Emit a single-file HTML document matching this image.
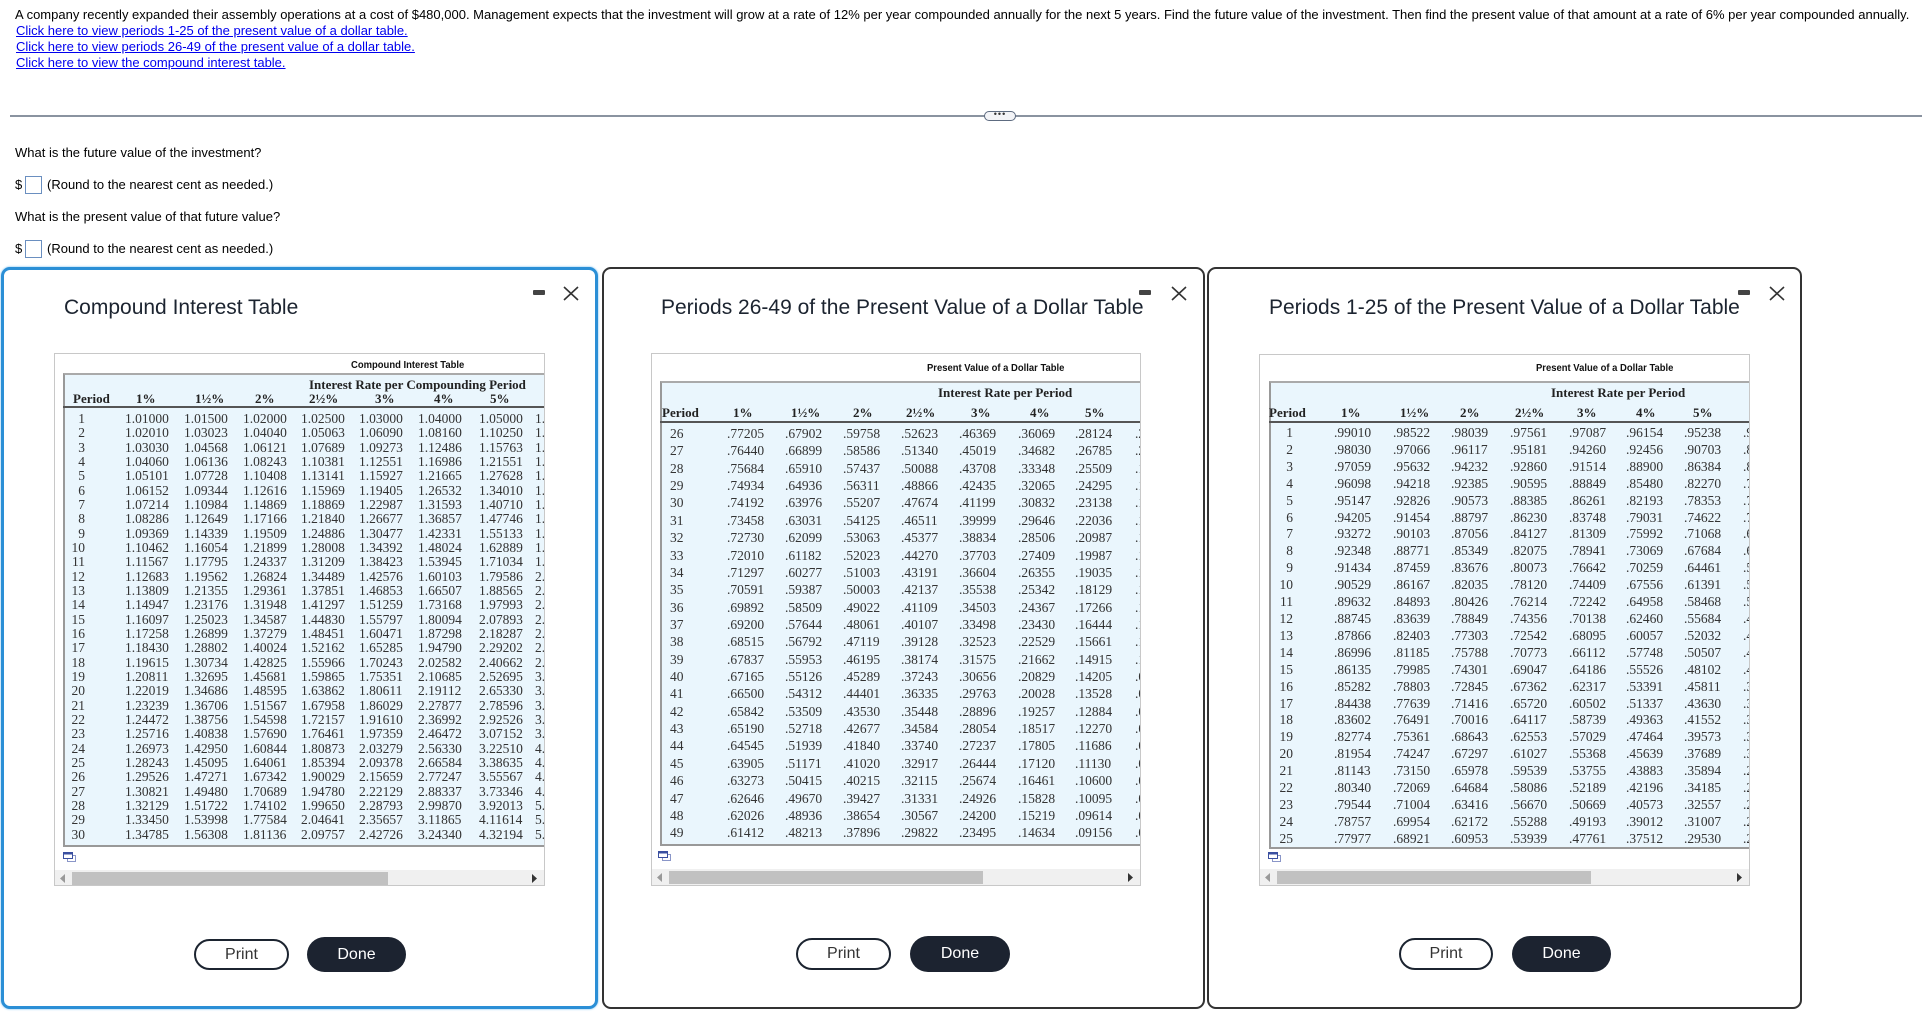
<!DOCTYPE html>
<html><head><meta charset="utf-8">
<style>
*{margin:0;padding:0;box-sizing:border-box}
body{width:1922px;height:1012px;overflow:hidden;background:#fff;font-family:"Liberation Sans",Arial,sans-serif;position:relative;color:#000}
.a{position:absolute;white-space:nowrap}
.t{font-size:13px;line-height:16px}
.lk{color:#0000ee;text-decoration:underline}
.ib{position:absolute;width:17px;height:18px;border:1px solid #6a8fc0;background:#fff}
.dlg{position:absolute;top:267px;height:742px;border:2px solid #333;border-radius:9px;background:#fff}
.dlg.f{border:3px solid #2b8fd6;box-shadow:0 0 2px #6bb8ee}
.ttl{position:absolute;top:296px;font-size:21px;color:#1c2430;white-space:nowrap}
.min{position:absolute;width:12px;height:5px;background:#444;border-radius:1px}
.box{position:absolute;border:1px solid #c8c8c8;background:#fff;overflow:hidden}
.inner{position:absolute;background:#eaf6fd;border-left:2px solid #999;border-top:2px solid #aaa;border-bottom:2px solid #999}
.lab{position:absolute;font-family:"Liberation Sans",sans-serif;font-weight:bold;font-size:10.5px;color:#111;white-space:nowrap;transform:scaleX(.9);transform-origin:left}
.irp{position:absolute;font-family:"Liberation Serif",serif;font-weight:bold;font-size:13px;color:#222;white-space:nowrap}
.hl{position:absolute;height:2px;background:#555}
table{position:absolute;border-collapse:collapse;table-layout:fixed;font-family:"Liberation Serif",serif;font-size:13.5px;color:#333}
td{padding:0;white-space:nowrap;overflow:hidden}
.h td{font-weight:bold;color:#222;font-size:13px}
.sb{position:absolute;left:0;right:0;height:17px;background:#f0f0f0}
.th{position:absolute;top:2px;height:13px;background:#c1c1c1}
.ico{position:absolute;width:13px;height:10px}
.btn{position:absolute;border-radius:18px;font-size:16px;text-align:center}
.pr{border:2px solid #1c2430;background:#fff;color:#333}
.dn{background:#1c2330;color:#fff}
</style></head><body>

<div class="a t" style="left:15px;top:7px">A company recently expanded their assembly operations at a cost of $480,000. Management expects that the investment will grow at a rate of 12% per year compounded annually for the next 5 years. Find the future value of the investment. Then find the present value of that amount at a rate of 6% per year compounded annually.</div>
<div class="a t lk" style="left:16px;top:23px">Click here to view periods 1-25 of the present value of a dollar table.</div>
<div class="a t lk" style="left:16px;top:39px">Click here to view periods 26-49 of the present value of a dollar table.</div>
<div class="a t lk" style="left:16px;top:55px">Click here to view the compound interest table.</div>

<div class="a" style="left:10px;top:115px;width:1912px;height:2px;background:#8a93a0"></div>
<div class="a" style="left:984px;top:111px;width:32px;height:10px;border:1.5px solid #5d6b80;border-radius:5px;background:#f3f4f7;font-size:9px;line-height:5px;text-align:center;color:#333;letter-spacing:1px">•••</div>

<div class="a t" style="left:15px;top:145px">What is the future value of the investment?</div>
<div class="a t" style="left:15px;top:177px">$</div><div class="ib" style="left:25px;top:176px"></div>
<div class="a t" style="left:47px;top:177px">(Round to the nearest cent as needed.)</div>
<div class="a t" style="left:15px;top:209px">What is the present value of that future value?</div>
<div class="a t" style="left:15px;top:241px">$</div><div class="ib" style="left:25px;top:240px"></div>
<div class="a t" style="left:47px;top:241px">(Round to the nearest cent as needed.)</div>

<!-- Dialog 1 -->
<div class="dlg f" style="left:1px;width:597px"></div>
<div class="ttl" style="left:64px">Compound Interest Table</div>
<div class="min" style="left:533px;top:290px"></div>
<svg class="a" style="left:563px;top:286px" width="16" height="15"><path d="M1 1L15 14M15 1L1 14" stroke="#333" stroke-width="1.6"/></svg>
<div class="box" style="left:54px;top:353px;width:491px;height:533px">
 <div class="lab" style="left:296px;top:5px">Compound Interest Table</div>
 <div class="inner" style="left:8px;top:19px;width:490px;height:474px"></div>
 <div class="irp" style="left:254px;top:23px">Interest Rate per Compounding Period</div>
 <div class="hl" style="left:8px;top:52px;width:490px"></div>
 <table class="h" style="left:8px;top:37px;width:532px"><colgroup><col style="width:62px"><col style="width:59px"><col style="width:59px"><col style="width:58px"><col style="width:58px"><col style="width:59px"><col style="width:61px"><col style="width:56px"><col style="width:60px"></colgroup>
 <tr><td style="padding-left:10px">Period</td><td style="padding-left:11px">1%</td><td style="padding-left:11px">1½%</td><td style="padding-left:12px">2%</td><td style="padding-left:8px">2½%</td><td style="padding-left:16px">3%</td><td style="padding-left:16px">4%</td><td style="padding-left:11px">5%</td><td></td></tr></table>
 <table style="left:8px;top:58px;width:532px;line-height:14.33px"><colgroup><col style="width:62px"><col style="width:59px"><col style="width:59px"><col style="width:58px"><col style="width:58px"><col style="width:59px"><col style="width:61px"><col style="width:56px"><col style="width:60px"></colgroup>
<tr><td style="text-align:right;padding-right:40px">1</td><td>1.01000</td><td>1.01500</td><td>1.02000</td><td>1.02500</td><td>1.03000</td><td>1.04000</td><td>1.05000</td><td>1.06000</td></tr>
<tr><td style="text-align:right;padding-right:40px">2</td><td>1.02010</td><td>1.03023</td><td>1.04040</td><td>1.05063</td><td>1.06090</td><td>1.08160</td><td>1.10250</td><td>1.12360</td></tr>
<tr><td style="text-align:right;padding-right:40px">3</td><td>1.03030</td><td>1.04568</td><td>1.06121</td><td>1.07689</td><td>1.09273</td><td>1.12486</td><td>1.15763</td><td>1.19102</td></tr>
<tr><td style="text-align:right;padding-right:40px">4</td><td>1.04060</td><td>1.06136</td><td>1.08243</td><td>1.10381</td><td>1.12551</td><td>1.16986</td><td>1.21551</td><td>1.26248</td></tr>
<tr><td style="text-align:right;padding-right:40px">5</td><td>1.05101</td><td>1.07728</td><td>1.10408</td><td>1.13141</td><td>1.15927</td><td>1.21665</td><td>1.27628</td><td>1.33823</td></tr>
<tr><td style="text-align:right;padding-right:40px">6</td><td>1.06152</td><td>1.09344</td><td>1.12616</td><td>1.15969</td><td>1.19405</td><td>1.26532</td><td>1.34010</td><td>1.41852</td></tr>
<tr><td style="text-align:right;padding-right:40px">7</td><td>1.07214</td><td>1.10984</td><td>1.14869</td><td>1.18869</td><td>1.22987</td><td>1.31593</td><td>1.40710</td><td>1.50363</td></tr>
<tr><td style="text-align:right;padding-right:40px">8</td><td>1.08286</td><td>1.12649</td><td>1.17166</td><td>1.21840</td><td>1.26677</td><td>1.36857</td><td>1.47746</td><td>1.59385</td></tr>
<tr><td style="text-align:right;padding-right:40px">9</td><td>1.09369</td><td>1.14339</td><td>1.19509</td><td>1.24886</td><td>1.30477</td><td>1.42331</td><td>1.55133</td><td>1.68948</td></tr>
<tr><td style="text-align:right;padding-right:40px">10</td><td>1.10462</td><td>1.16054</td><td>1.21899</td><td>1.28008</td><td>1.34392</td><td>1.48024</td><td>1.62889</td><td>1.79085</td></tr>
<tr><td style="text-align:right;padding-right:40px">11</td><td>1.11567</td><td>1.17795</td><td>1.24337</td><td>1.31209</td><td>1.38423</td><td>1.53945</td><td>1.71034</td><td>1.89830</td></tr>
<tr><td style="text-align:right;padding-right:40px">12</td><td>1.12683</td><td>1.19562</td><td>1.26824</td><td>1.34489</td><td>1.42576</td><td>1.60103</td><td>1.79586</td><td>2.01220</td></tr>
<tr><td style="text-align:right;padding-right:40px">13</td><td>1.13809</td><td>1.21355</td><td>1.29361</td><td>1.37851</td><td>1.46853</td><td>1.66507</td><td>1.88565</td><td>2.13293</td></tr>
<tr><td style="text-align:right;padding-right:40px">14</td><td>1.14947</td><td>1.23176</td><td>1.31948</td><td>1.41297</td><td>1.51259</td><td>1.73168</td><td>1.97993</td><td>2.26090</td></tr>
<tr><td style="text-align:right;padding-right:40px">15</td><td>1.16097</td><td>1.25023</td><td>1.34587</td><td>1.44830</td><td>1.55797</td><td>1.80094</td><td>2.07893</td><td>2.39656</td></tr>
<tr><td style="text-align:right;padding-right:40px">16</td><td>1.17258</td><td>1.26899</td><td>1.37279</td><td>1.48451</td><td>1.60471</td><td>1.87298</td><td>2.18287</td><td>2.54035</td></tr>
<tr><td style="text-align:right;padding-right:40px">17</td><td>1.18430</td><td>1.28802</td><td>1.40024</td><td>1.52162</td><td>1.65285</td><td>1.94790</td><td>2.29202</td><td>2.69277</td></tr>
<tr><td style="text-align:right;padding-right:40px">18</td><td>1.19615</td><td>1.30734</td><td>1.42825</td><td>1.55966</td><td>1.70243</td><td>2.02582</td><td>2.40662</td><td>2.85434</td></tr>
<tr><td style="text-align:right;padding-right:40px">19</td><td>1.20811</td><td>1.32695</td><td>1.45681</td><td>1.59865</td><td>1.75351</td><td>2.10685</td><td>2.52695</td><td>3.02560</td></tr>
<tr><td style="text-align:right;padding-right:40px">20</td><td>1.22019</td><td>1.34686</td><td>1.48595</td><td>1.63862</td><td>1.80611</td><td>2.19112</td><td>2.65330</td><td>3.20714</td></tr>
<tr><td style="text-align:right;padding-right:40px">21</td><td>1.23239</td><td>1.36706</td><td>1.51567</td><td>1.67958</td><td>1.86029</td><td>2.27877</td><td>2.78596</td><td>3.39956</td></tr>
<tr><td style="text-align:right;padding-right:40px">22</td><td>1.24472</td><td>1.38756</td><td>1.54598</td><td>1.72157</td><td>1.91610</td><td>2.36992</td><td>2.92526</td><td>3.60354</td></tr>
<tr><td style="text-align:right;padding-right:40px">23</td><td>1.25716</td><td>1.40838</td><td>1.57690</td><td>1.76461</td><td>1.97359</td><td>2.46472</td><td>3.07152</td><td>3.81975</td></tr>
<tr><td style="text-align:right;padding-right:40px">24</td><td>1.26973</td><td>1.42950</td><td>1.60844</td><td>1.80873</td><td>2.03279</td><td>2.56330</td><td>3.22510</td><td>4.04893</td></tr>
<tr><td style="text-align:right;padding-right:40px">25</td><td>1.28243</td><td>1.45095</td><td>1.64061</td><td>1.85394</td><td>2.09378</td><td>2.66584</td><td>3.38635</td><td>4.29187</td></tr>
<tr><td style="text-align:right;padding-right:40px">26</td><td>1.29526</td><td>1.47271</td><td>1.67342</td><td>1.90029</td><td>2.15659</td><td>2.77247</td><td>3.55567</td><td>4.54938</td></tr>
<tr><td style="text-align:right;padding-right:40px">27</td><td>1.30821</td><td>1.49480</td><td>1.70689</td><td>1.94780</td><td>2.22129</td><td>2.88337</td><td>3.73346</td><td>4.82235</td></tr>
<tr><td style="text-align:right;padding-right:40px">28</td><td>1.32129</td><td>1.51722</td><td>1.74102</td><td>1.99650</td><td>2.28793</td><td>2.99870</td><td>3.92013</td><td>5.11169</td></tr>
<tr><td style="text-align:right;padding-right:40px">29</td><td>1.33450</td><td>1.53998</td><td>1.77584</td><td>2.04641</td><td>2.35657</td><td>3.11865</td><td>4.11614</td><td>5.41839</td></tr>
<tr><td style="text-align:right;padding-right:40px">30</td><td>1.34785</td><td>1.56308</td><td>1.81136</td><td>2.09757</td><td>2.42726</td><td>3.24340</td><td>4.32194</td><td>5.74349</td></tr>
 </table>
 <svg class="ico" style="left:8px;top:498px" width="13" height="10"><rect x="0.5" y="0.5" width="9" height="6" fill="#fff" stroke="#3a4fa0"/><rect x="0.5" y="0.5" width="9" height="2" fill="#3a4fa0"/><path d="M10 3.5h2.5v6h-8v-2.5" fill="none" stroke="#8a96c8"/></svg>
 <div class="sb" style="top:516px"><svg class="a" style="left:5px;top:4px" width="5" height="9"><path d="M5 0L0 4.5L5 9Z" fill="#999"/></svg><div class="th" style="left:17px;width:316px"></div><svg class="a" style="right:7px;top:4px" width="5" height="9"><path d="M0 0L5 4.5L0 9Z" fill="#333"/></svg></div>
</div>
<div class="btn pr" style="left:194px;top:939px;width:95px;height:31px;line-height:27px">Print</div>
<div class="btn dn" style="left:307px;top:937px;width:99px;height:35px;line-height:35px">Done</div>

<!-- Dialog 2 -->
<div class="dlg" style="left:602px;width:603px"></div>
<div class="ttl" style="left:661px">Periods 26-49 of the Present Value of a Dollar Table</div>
<div class="min" style="left:1139px;top:290px"></div>
<svg class="a" style="left:1171px;top:286px" width="16" height="15"><path d="M1 1L15 14M15 1L1 14" stroke="#333" stroke-width="1.6"/></svg>
<div class="box" style="left:651px;top:353px;width:490px;height:533px">
 <div class="lab" style="left:275px;top:8px">Present Value of a Dollar Table</div>
 <div class="inner" style="left:8px;top:27px;width:490px;height:465px"></div>
 <div class="irp" style="left:286px;top:31px">Interest Rate per Period</div>
 <div class="hl" style="left:8px;top:67px;width:490px"></div>
 <table class="h" style="left:8px;top:51px;width:535px"><colgroup><col style="width:67px"><col style="width:58px"><col style="width:58px"><col style="width:58px"><col style="width:58px"><col style="width:59px"><col style="width:57px"><col style="width:60px"><col style="width:60px"></colgroup>
 <tr><td style="padding-left:2px">Period</td><td style="padding-left:6px">1%</td><td style="padding-left:6px">1½%</td><td style="padding-left:10px">2%</td><td style="padding-left:5px">2½%</td><td style="padding-left:12px">3%</td><td style="padding-left:12px">4%</td><td style="padding-left:10px">5%</td><td></td></tr></table>
 <table style="left:8px;top:71px;width:535px;line-height:17.36px"><colgroup><col style="width:67px"><col style="width:58px"><col style="width:58px"><col style="width:58px"><col style="width:58px"><col style="width:59px"><col style="width:57px"><col style="width:60px"><col style="width:60px"></colgroup>
<tr><td style="padding-left:10px">26</td><td>.77205</td><td>.67902</td><td>.59758</td><td>.52623</td><td>.46369</td><td>.36069</td><td>.28124</td><td>.21981</td></tr>
<tr><td style="padding-left:10px">27</td><td>.76440</td><td>.66899</td><td>.58586</td><td>.51340</td><td>.45019</td><td>.34682</td><td>.26785</td><td>.20737</td></tr>
<tr><td style="padding-left:10px">28</td><td>.75684</td><td>.65910</td><td>.57437</td><td>.50088</td><td>.43708</td><td>.33348</td><td>.25509</td><td>.19563</td></tr>
<tr><td style="padding-left:10px">29</td><td>.74934</td><td>.64936</td><td>.56311</td><td>.48866</td><td>.42435</td><td>.32065</td><td>.24295</td><td>.18456</td></tr>
<tr><td style="padding-left:10px">30</td><td>.74192</td><td>.63976</td><td>.55207</td><td>.47674</td><td>.41199</td><td>.30832</td><td>.23138</td><td>.17411</td></tr>
<tr><td style="padding-left:10px">31</td><td>.73458</td><td>.63031</td><td>.54125</td><td>.46511</td><td>.39999</td><td>.29646</td><td>.22036</td><td>.16425</td></tr>
<tr><td style="padding-left:10px">32</td><td>.72730</td><td>.62099</td><td>.53063</td><td>.45377</td><td>.38834</td><td>.28506</td><td>.20987</td><td>.15496</td></tr>
<tr><td style="padding-left:10px">33</td><td>.72010</td><td>.61182</td><td>.52023</td><td>.44270</td><td>.37703</td><td>.27409</td><td>.19987</td><td>.14619</td></tr>
<tr><td style="padding-left:10px">34</td><td>.71297</td><td>.60277</td><td>.51003</td><td>.43191</td><td>.36604</td><td>.26355</td><td>.19035</td><td>.13791</td></tr>
<tr><td style="padding-left:10px">35</td><td>.70591</td><td>.59387</td><td>.50003</td><td>.42137</td><td>.35538</td><td>.25342</td><td>.18129</td><td>.13011</td></tr>
<tr><td style="padding-left:10px">36</td><td>.69892</td><td>.58509</td><td>.49022</td><td>.41109</td><td>.34503</td><td>.24367</td><td>.17266</td><td>.12274</td></tr>
<tr><td style="padding-left:10px">37</td><td>.69200</td><td>.57644</td><td>.48061</td><td>.40107</td><td>.33498</td><td>.23430</td><td>.16444</td><td>.11579</td></tr>
<tr><td style="padding-left:10px">38</td><td>.68515</td><td>.56792</td><td>.47119</td><td>.39128</td><td>.32523</td><td>.22529</td><td>.15661</td><td>.10924</td></tr>
<tr><td style="padding-left:10px">39</td><td>.67837</td><td>.55953</td><td>.46195</td><td>.38174</td><td>.31575</td><td>.21662</td><td>.14915</td><td>.10306</td></tr>
<tr><td style="padding-left:10px">40</td><td>.67165</td><td>.55126</td><td>.45289</td><td>.37243</td><td>.30656</td><td>.20829</td><td>.14205</td><td>.09722</td></tr>
<tr><td style="padding-left:10px">41</td><td>.66500</td><td>.54312</td><td>.44401</td><td>.36335</td><td>.29763</td><td>.20028</td><td>.13528</td><td>.09172</td></tr>
<tr><td style="padding-left:10px">42</td><td>.65842</td><td>.53509</td><td>.43530</td><td>.35448</td><td>.28896</td><td>.19257</td><td>.12884</td><td>.08653</td></tr>
<tr><td style="padding-left:10px">43</td><td>.65190</td><td>.52718</td><td>.42677</td><td>.34584</td><td>.28054</td><td>.18517</td><td>.12270</td><td>.08163</td></tr>
<tr><td style="padding-left:10px">44</td><td>.64545</td><td>.51939</td><td>.41840</td><td>.33740</td><td>.27237</td><td>.17805</td><td>.11686</td><td>.07701</td></tr>
<tr><td style="padding-left:10px">45</td><td>.63905</td><td>.51171</td><td>.41020</td><td>.32917</td><td>.26444</td><td>.17120</td><td>.11130</td><td>.07265</td></tr>
<tr><td style="padding-left:10px">46</td><td>.63273</td><td>.50415</td><td>.40215</td><td>.32115</td><td>.25674</td><td>.16461</td><td>.10600</td><td>.06854</td></tr>
<tr><td style="padding-left:10px">47</td><td>.62646</td><td>.49670</td><td>.39427</td><td>.31331</td><td>.24926</td><td>.15828</td><td>.10095</td><td>.06466</td></tr>
<tr><td style="padding-left:10px">48</td><td>.62026</td><td>.48936</td><td>.38654</td><td>.30567</td><td>.24200</td><td>.15219</td><td>.09614</td><td>.06100</td></tr>
<tr><td style="padding-left:10px">49</td><td>.61412</td><td>.48213</td><td>.37896</td><td>.29822</td><td>.23495</td><td>.14634</td><td>.09156</td><td>.05755</td></tr>
 </table>
 <svg class="ico" style="left:6px;top:497px" width="13" height="10"><rect x="0.5" y="0.5" width="9" height="6" fill="#fff" stroke="#3a4fa0"/><rect x="0.5" y="0.5" width="9" height="2" fill="#3a4fa0"/><path d="M10 3.5h2.5v6h-8v-2.5" fill="none" stroke="#8a96c8"/></svg>
 <div class="sb" style="top:515px"><svg class="a" style="left:5px;top:4px" width="5" height="9"><path d="M5 0L0 4.5L5 9Z" fill="#999"/></svg><div class="th" style="left:17px;width:314px"></div><svg class="a" style="right:7px;top:4px" width="5" height="9"><path d="M0 0L5 4.5L0 9Z" fill="#333"/></svg></div>
</div>
<div class="btn pr" style="left:796px;top:938px;width:95px;height:32px;line-height:28px">Print</div>
<div class="btn dn" style="left:910px;top:936px;width:100px;height:36px;line-height:36px">Done</div>

<!-- Dialog 3 -->
<div class="dlg" style="left:1207px;width:595px"></div>
<div class="ttl" style="left:1269px">Periods 1-25 of the Present Value of a Dollar Table</div>
<div class="min" style="left:1738px;top:290px"></div>
<svg class="a" style="left:1769px;top:286px" width="16" height="15"><path d="M1 1L15 14M15 1L1 14" stroke="#333" stroke-width="1.6"/></svg>
<div class="box" style="left:1259px;top:354px;width:491px;height:532px">
 <div class="lab" style="left:276px;top:7px">Present Value of a Dollar Table</div>
 <div class="inner" style="left:9px;top:26px;width:490px;height:468px"></div>
 <div class="irp" style="left:291px;top:30px">Interest Rate per Period</div>
 <div class="hl" style="left:9px;top:66px;width:490px"></div>
 <table class="h" style="left:9px;top:50px;width:534px"><colgroup><col style="width:65px"><col style="width:59px"><col style="width:58px"><col style="width:59px"><col style="width:59px"><col style="width:57px"><col style="width:58px"><col style="width:59px"><col style="width:60px"></colgroup>
 <tr><td style="padding-left:0">Period</td><td style="padding-left:7px">1%</td><td style="padding-left:7px">1½%</td><td style="padding-left:9px">2%</td><td style="padding-left:5px">2½%</td><td style="padding-left:8px">3%</td><td style="padding-left:10px">4%</td><td style="padding-left:9px">5%</td><td></td></tr></table>
 <table style="left:9px;top:70px;width:534px;line-height:16.9px"><colgroup><col style="width:65px"><col style="width:59px"><col style="width:58px"><col style="width:59px"><col style="width:59px"><col style="width:57px"><col style="width:58px"><col style="width:59px"><col style="width:60px"></colgroup>
<tr><td style="text-align:right;padding-right:41px">1</td><td>.99010</td><td>.98522</td><td>.98039</td><td>.97561</td><td>.97087</td><td>.96154</td><td>.95238</td><td>.94340</td></tr>
<tr><td style="text-align:right;padding-right:41px">2</td><td>.98030</td><td>.97066</td><td>.96117</td><td>.95181</td><td>.94260</td><td>.92456</td><td>.90703</td><td>.89000</td></tr>
<tr><td style="text-align:right;padding-right:41px">3</td><td>.97059</td><td>.95632</td><td>.94232</td><td>.92860</td><td>.91514</td><td>.88900</td><td>.86384</td><td>.83962</td></tr>
<tr><td style="text-align:right;padding-right:41px">4</td><td>.96098</td><td>.94218</td><td>.92385</td><td>.90595</td><td>.88849</td><td>.85480</td><td>.82270</td><td>.79209</td></tr>
<tr><td style="text-align:right;padding-right:41px">5</td><td>.95147</td><td>.92826</td><td>.90573</td><td>.88385</td><td>.86261</td><td>.82193</td><td>.78353</td><td>.74726</td></tr>
<tr><td style="text-align:right;padding-right:41px">6</td><td>.94205</td><td>.91454</td><td>.88797</td><td>.86230</td><td>.83748</td><td>.79031</td><td>.74622</td><td>.70496</td></tr>
<tr><td style="text-align:right;padding-right:41px">7</td><td>.93272</td><td>.90103</td><td>.87056</td><td>.84127</td><td>.81309</td><td>.75992</td><td>.71068</td><td>.66506</td></tr>
<tr><td style="text-align:right;padding-right:41px">8</td><td>.92348</td><td>.88771</td><td>.85349</td><td>.82075</td><td>.78941</td><td>.73069</td><td>.67684</td><td>.62741</td></tr>
<tr><td style="text-align:right;padding-right:41px">9</td><td>.91434</td><td>.87459</td><td>.83676</td><td>.80073</td><td>.76642</td><td>.70259</td><td>.64461</td><td>.59190</td></tr>
<tr><td style="text-align:right;padding-right:41px">10</td><td>.90529</td><td>.86167</td><td>.82035</td><td>.78120</td><td>.74409</td><td>.67556</td><td>.61391</td><td>.55839</td></tr>
<tr><td style="text-align:right;padding-right:41px">11</td><td>.89632</td><td>.84893</td><td>.80426</td><td>.76214</td><td>.72242</td><td>.64958</td><td>.58468</td><td>.52679</td></tr>
<tr><td style="text-align:right;padding-right:41px">12</td><td>.88745</td><td>.83639</td><td>.78849</td><td>.74356</td><td>.70138</td><td>.62460</td><td>.55684</td><td>.49697</td></tr>
<tr><td style="text-align:right;padding-right:41px">13</td><td>.87866</td><td>.82403</td><td>.77303</td><td>.72542</td><td>.68095</td><td>.60057</td><td>.52032</td><td>.46884</td></tr>
<tr><td style="text-align:right;padding-right:41px">14</td><td>.86996</td><td>.81185</td><td>.75788</td><td>.70773</td><td>.66112</td><td>.57748</td><td>.50507</td><td>.44230</td></tr>
<tr><td style="text-align:right;padding-right:41px">15</td><td>.86135</td><td>.79985</td><td>.74301</td><td>.69047</td><td>.64186</td><td>.55526</td><td>.48102</td><td>.41727</td></tr>
<tr><td style="text-align:right;padding-right:41px">16</td><td>.85282</td><td>.78803</td><td>.72845</td><td>.67362</td><td>.62317</td><td>.53391</td><td>.45811</td><td>.39365</td></tr>
<tr><td style="text-align:right;padding-right:41px">17</td><td>.84438</td><td>.77639</td><td>.71416</td><td>.65720</td><td>.60502</td><td>.51337</td><td>.43630</td><td>.37136</td></tr>
<tr><td style="text-align:right;padding-right:41px">18</td><td>.83602</td><td>.76491</td><td>.70016</td><td>.64117</td><td>.58739</td><td>.49363</td><td>.41552</td><td>.35034</td></tr>
<tr><td style="text-align:right;padding-right:41px">19</td><td>.82774</td><td>.75361</td><td>.68643</td><td>.62553</td><td>.57029</td><td>.47464</td><td>.39573</td><td>.33051</td></tr>
<tr><td style="text-align:right;padding-right:41px">20</td><td>.81954</td><td>.74247</td><td>.67297</td><td>.61027</td><td>.55368</td><td>.45639</td><td>.37689</td><td>.31180</td></tr>
<tr><td style="text-align:right;padding-right:41px">21</td><td>.81143</td><td>.73150</td><td>.65978</td><td>.59539</td><td>.53755</td><td>.43883</td><td>.35894</td><td>.29416</td></tr>
<tr><td style="text-align:right;padding-right:41px">22</td><td>.80340</td><td>.72069</td><td>.64684</td><td>.58086</td><td>.52189</td><td>.42196</td><td>.34185</td><td>.27751</td></tr>
<tr><td style="text-align:right;padding-right:41px">23</td><td>.79544</td><td>.71004</td><td>.63416</td><td>.56670</td><td>.50669</td><td>.40573</td><td>.32557</td><td>.26180</td></tr>
<tr><td style="text-align:right;padding-right:41px">24</td><td>.78757</td><td>.69954</td><td>.62172</td><td>.55288</td><td>.49193</td><td>.39012</td><td>.31007</td><td>.24698</td></tr>
<tr><td style="text-align:right;padding-right:41px">25</td><td>.77977</td><td>.68921</td><td>.60953</td><td>.53939</td><td>.47761</td><td>.37512</td><td>.29530</td><td>.23300</td></tr>
 </table>
 <svg class="ico" style="left:8px;top:497px" width="13" height="10"><rect x="0.5" y="0.5" width="9" height="6" fill="#fff" stroke="#3a4fa0"/><rect x="0.5" y="0.5" width="9" height="2" fill="#3a4fa0"/><path d="M10 3.5h2.5v6h-8v-2.5" fill="none" stroke="#8a96c8"/></svg>
 <div class="sb" style="top:514px"><svg class="a" style="left:5px;top:4px" width="5" height="9"><path d="M5 0L0 4.5L5 9Z" fill="#999"/></svg><div class="th" style="left:17px;width:314px"></div><svg class="a" style="right:7px;top:4px" width="5" height="9"><path d="M0 0L5 4.5L0 9Z" fill="#333"/></svg></div>
</div>
<div class="btn pr" style="left:1399px;top:938px;width:94px;height:32px;line-height:28px">Print</div>
<div class="btn dn" style="left:1512px;top:936px;width:99px;height:36px;line-height:36px">Done</div>

</body></html>
